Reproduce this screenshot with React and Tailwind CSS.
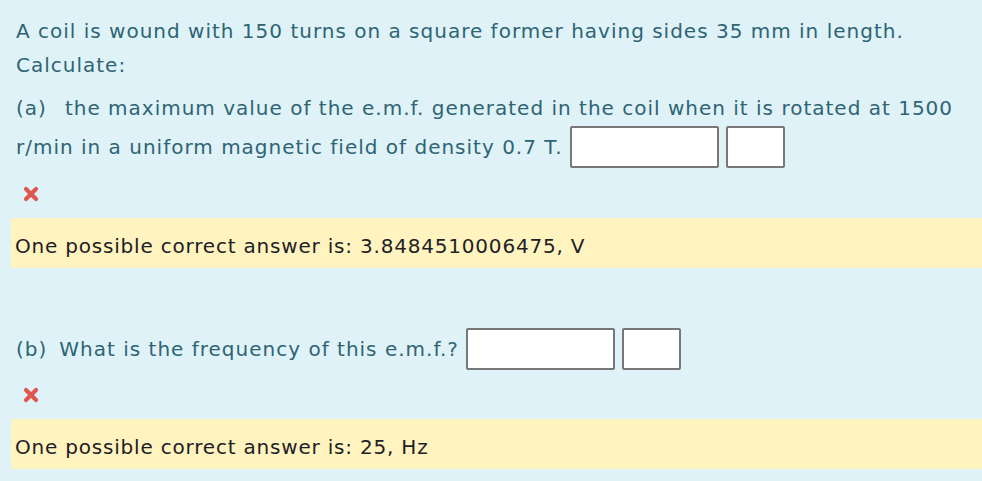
import React from "react";

const FONT = { fontFamily: "'DejaVu Sans', 'Open Sans', sans-serif" };

const Cross = () => (
  <svg width="16" height="16" viewBox="0 0 16 16" className="block">
    <path d="M3 3 L13 13 M13 3 L3 13" stroke="#e0564d" strokeWidth="4.2" strokeLinecap="round" />
  </svg>
);

const Box = ({ w }) => (
  <span
    className={`inline-block align-middle h-[42px] bg-white border-2 border-[#777777] rounded-[2px] ${w}`}
  />
);

const Feedback = ({ text }) => (
  <>
    <div className="pl-[1px] pt-[18px] h-[50px] ml-[6px]">
      <Cross />
    </div>
    <div className="ml-[-5px] bg-[#fff3bf] h-[50px] pl-[4px] pt-[13px] text-[20px] leading-[30px] text-[#1d2125] tracking-[0.8px]">
      {text}
    </div>
  </>
);

export default function App() {
  return (
    <div className="w-[982px] h-[481px] bg-[#def2f8] text-[#2f6473] pl-4 overflow-hidden tracking-[1px]" style={FONT}>
      <p className="pt-[14px] text-[20px] leading-[34px]">
        A coil is wound with 150 turns on a square former having sides 35 mm in length.
        <br />
        Calculate:
      </p>

      <div className="mt-[9px] text-[20px] leading-[34px]">
        <div className="whitespace-nowrap">
          <span className="mr-[18px]">(a)</span>the maximum value of the e.m.f. generated in the coil when it is rotated at 1500
        </div>
        <div className="whitespace-nowrap h-[43px] flex items-center gap-[7px]">
          <span>r/min in a uniform magnetic field of density 0.7 T.</span>
          <Box w="w-[149px]" />
          <Box w="w-[59px]" />
        </div>
      </div>

      <Feedback text="One possible correct answer is: 3.8484510006475, V" />

      <div className="mt-[60px] h-[41px] flex items-center gap-[7px] text-[20px] whitespace-nowrap">
        <span>
          <span className="mr-[12px]">(b)</span>What is the frequency of this e.m.f.?
        </span>
        <Box w="w-[149px]" />
        <Box w="w-[59px]" />
      </div>

      <Feedback text="One possible correct answer is: 25, Hz" />
    </div>
  );
}
